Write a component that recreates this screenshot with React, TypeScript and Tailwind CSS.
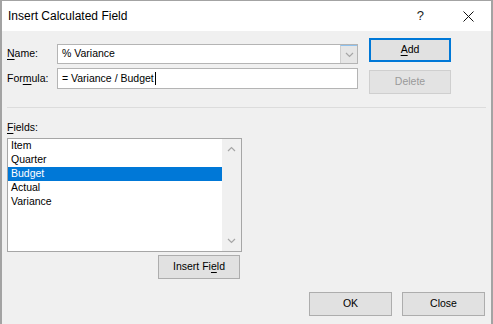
import type { ReactNode } from 'react';

const fields = ['Item', 'Quarter', 'Budget', 'Actual', 'Variance'];

function Btn({
  children,
  className = '',
  disabled,
  focused,
}: {
  children: ReactNode;
  className?: string;
  disabled?: boolean;
  focused?: boolean;
}) {
  return (
    <button
      type="button"
      className={`flex h-[24px] items-center justify-center border text-[10.5px] ${
        focused
          ? 'border-[#0078d7] bg-[#e1e1e1] text-black shadow-[inset_0_0_0_1px_#0078d7]'
          : disabled
            ? 'border-[#cfcfcf] bg-[#e3e3e3] text-[#9a9a9a]'
            : 'border-[#adadad] bg-[#e1e1e1] text-black'
      } ${className}`}
    >
      {children}
    </button>
  );
}

function Chevron({ up }: { up?: boolean }) {
  return (
    <svg width="9" height="6" viewBox="0 0 9 6" className="text-[#a6a6a6]">
      <path
        d={up ? 'M1 5 L4.5 1.5 L8 5' : 'M1 1 L4.5 4.5 L8 1'}
        fill="none"
        stroke="currentColor"
        strokeWidth="1.2"
      />
    </svg>
  );
}

export default function App() {
  return (
    <div className="h-[324px] w-[493px] overflow-hidden bg-white font-['Segoe_UI','Liberation_Sans',Arial,sans-serif] text-black">
      <div className="flex h-full flex-col border-x-2 border-t border-[#a3a3a3]">
        {/* Title bar */}
        <div className="flex h-[30px] shrink-0 items-center bg-white pl-[6px]">
          <span className="text-[12px]">Insert Calculated Field</span>
          <span className="ml-auto mr-[39px] text-[13px] text-[#222]">?</span>
          <svg width="11" height="11" viewBox="0 0 11 11" className="mr-[17px]">
            <path d="M0.5 0.5 L10.5 10.5 M10.5 0.5 L0.5 10.5" stroke="#111" strokeWidth="1" />
          </svg>
        </div>

        {/* Body */}
        <div className="flex flex-1 flex-col bg-[#f0f0f0] pl-[5px] pr-[6px] text-[10.5px]">
          <div className="flex items-start">
            <div className="pt-[13px]">
              <div className="flex h-[20px] items-center">
                <span className="w-[50px]">
                  <span className="underline underline-offset-2">N</span>ame:
                </span>
                <div className="flex h-[20px] w-[301px] border border-[#b4b4b4] bg-white">
                  <span className="flex flex-1 items-center pl-[4px]">% Variance</span>
                  <div className="flex w-[17px] items-center justify-center border-l border-t border-l-[#cfcfcf] border-t-[#8fc2ee] bg-[#e6e6e6]">
                    <Chevron />
                  </div>
                </div>
              </div>
              <div className="mt-[4px] flex h-[21px] items-center">
                <span className="w-[50px]">
                  For<span className="underline underline-offset-2">m</span>ula:
                </span>
                <div className="flex h-[21px] w-[301px] items-center border border-[#b4b4b4] bg-white pl-[4px]">
                  <span>= Variance / Budget</span>
                  <span className="ml-px h-[13px] w-px bg-black" />
                </div>
              </div>
            </div>
            <div className="ml-[11px] flex flex-col gap-[8px] pt-[7px]">
              <Btn focused className="w-[82px]">
                <span className="underline underline-offset-2">A</span>dd
              </Btn>
              <Btn disabled className="w-[82px]">
                Delete
              </Btn>
            </div>
          </div>

          <div className="mr-[-1px] mt-[13px] border-t border-[#dcdcdc]" />

          <div className="mt-[13px] flex h-[14px] items-center">
            <span>
              <span className="underline underline-offset-2">F</span>ields:
            </span>
          </div>

          <div className="mt-[3px] flex h-[114px] w-[235px] border border-[#a6a6a6] bg-white">
            <ul className="flex-1">
              {fields.map((f) => (
                <li
                  key={f}
                  className={`flex h-[14px] items-center pl-[3px] ${
                    f === 'Budget' ? 'bg-[#0078d7] text-white' : ''
                  }`}
                >
                  {f}
                </li>
              ))}
            </ul>
            <div className="flex w-[19px] flex-col items-center justify-between bg-[#f0f0f0] py-[7px]">
              <Chevron up />
              <Chevron />
            </div>
          </div>

          <Btn className="ml-[151px] mt-[3px] w-[82px]">
            Insert Fi<span className="underline underline-offset-2">e</span>ld
          </Btn>

          <div className="mt-[13px] flex justify-end gap-[10px]">
            <Btn className="w-[83px]">OK</Btn>
            <Btn className="w-[83px]">Close</Btn>
          </div>
        </div>
      </div>
    </div>
  );
}
